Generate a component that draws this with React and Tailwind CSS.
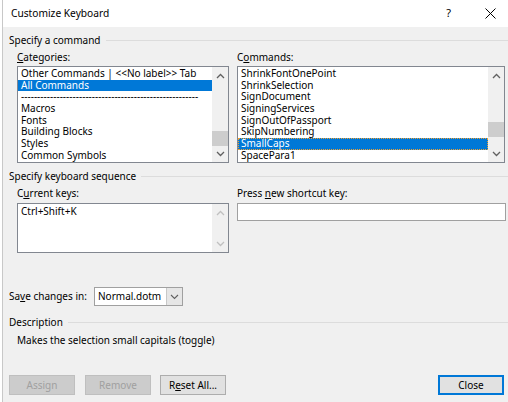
import React from "react";

const font = { fontFamily: '"Noto Sans", "Open Sans", sans-serif' };

function ScrollBar({ thumbTop, disabled, height }) {
  const color = disabled ? "#c0c0c0" : "#606060";
  return (
    <div className="flex w-[16px] flex-col bg-[#f0f0f0]" style={{ height }}>
      <div className="flex h-[17px] w-full items-center justify-center">
        <svg width="9" height="6" viewBox="0 0 9 6">
          <path d="M1 5 L4.5 1.5 L8 5" fill="none" stroke={color} strokeWidth="1.3" />
        </svg>
      </div>
      <div className="relative w-full flex-1">
        {thumbTop !== undefined && (
          <div className="absolute left-0 h-[15px] w-full bg-[#cdcdcd]" style={{ top: thumbTop }} />
        )}
      </div>
      <div className="flex h-[17px] w-full items-center justify-center">
        <svg width="9" height="6" viewBox="0 0 9 6">
          <path d="M1 1 L4.5 4.5 L8 1" fill="none" stroke={color} strokeWidth="1.3" />
        </svg>
      </div>
    </div>
  );
}

function Row({ text, selected, focus }) {
  return (
    <div
      className={
        "h-[11.7px] whitespace-nowrap pl-[3px] leading-[11.7px] " +
        (selected ? "bg-[#0078d7] text-white " : "") +
        (focus ? "outline outline-1 outline-dotted outline-[#f0a030] -outline-offset-1" : "")
      }
    >
      {text}
    </div>
  );
}

function Section({ title }) {
  return (
    <div className="flex h-[13px] items-center gap-[5px] pl-[6px] leading-[13px]">
      <span className="whitespace-nowrap">{title}</span>
      <div className="h-px flex-1 bg-[#dcdcdc]" />
    </div>
  );
}

function Button({ children, disabled, primary }) {
  return (
    <div
      className={
        "flex h-[20px] w-[66px] items-center justify-center leading-[13px] " +
        (primary
          ? "border-2 border-[#0078d7] bg-[#e1e1e1]"
          : disabled
          ? "border border-[#bfbfbf] bg-[#cccccc] text-[#a0a0a0]"
          : "border border-[#adadad] bg-[#e1e1e1]")
      }
    >
      {children}
    </div>
  );
}

export default function App() {
  const categories = [
    "Other Commands | <<No label>> Tab",
    "All Commands",
    "-------------------------------------------------------",
    "Macros",
    "Fonts",
    "Building Blocks",
    "Styles",
    "Common Symbols",
  ];
  const commands = [
    "ShrinkFontOnePoint",
    "ShrinkSelection",
    "SignDocument",
    "SigningServices",
    "SignOutOfPassport",
    "SkipNumbering",
    "SmallCaps",
    "SpacePara1",
  ];
  return (
    <div className="flex h-[402px] w-[508px] overflow-hidden bg-white text-[10px] text-black" style={font}>
      <div className="w-[3px] border-r border-[#c8c8c8] bg-white" />
      <div className="flex flex-1 flex-col">
        <div className="flex h-[27px] items-center bg-white pl-[8px]">
          <span className="text-[10.2px]">Customize Keyboard</span>
          <span className="ml-auto mr-[34px] text-[11px]">?</span>
          <svg width="11" height="11" viewBox="0 0 11 11" className="mr-[12px]">
            <path d="M0.5 0.5 L10.5 10.5 M10.5 0.5 L0.5 10.5" stroke="#000" strokeWidth="1" />
          </svg>
        </div>
        <div className="flex flex-1 flex-col bg-[#f0f0f0] pt-[7px]">
          <Section title="Specify a command" />
          <div className="mt-[4px] flex gap-[8px] pl-[14px] pr-[3px]">
            <div className="flex w-[212px] flex-col">
              <div className="h-[13px] leading-[13px]">
                <u>C</u>ategories:
              </div>
              <div className="mt-[2px] flex h-[97px] border border-[#828790] bg-white">
                <div className="flex-1 overflow-hidden pt-[1px]">
                  {categories.map((c, i) => (
                    <Row key={i} text={c} selected={i === 1} />
                  ))}
                </div>
                <ScrollBar thumbTop={47} height={95} />
              </div>
            </div>
            <div className="flex flex-1 flex-col">
              <div className="h-[13px] leading-[13px]">
                C<u>o</u>mmands:
              </div>
              <div className="mt-[2px] flex h-[97px] border border-[#828790] bg-white">
                <div className="flex-1 overflow-hidden pt-[1px]">
                  {commands.map((c, i) => (
                    <Row key={i} text={c} selected={i === 6} focus={i === 6} />
                  ))}
                </div>
                <ScrollBar thumbTop={38} height={95} />
              </div>
            </div>
          </div>
          <div className="mt-[7px]">
            <Section title="Specify keyboard sequence" />
          </div>
          <div className="mt-[4px] flex gap-[8px] pl-[14px] pr-[2px]">
            <div className="flex w-[212px] flex-col">
              <div className="h-[13px] leading-[13px]">
                C<u>u</u>rrent keys:
              </div>
              <div className="mt-[3px] flex h-[50px] border border-[#828790] bg-white">
                <div className="flex-1 pl-[3px] pt-[1px] leading-[13px]">Ctrl+Shift+K</div>
                <ScrollBar disabled height={48} />
              </div>
            </div>
            <div className="flex flex-1 flex-col">
              <div className="h-[13px] leading-[13px]">
                Press <u>n</u>ew shortcut key:
              </div>
              <div className="mt-[3px] h-[18px] border border-[#a0a0a0] bg-white" />
            </div>
          </div>
          <div className="mt-[34px] flex h-[19px] items-center pl-[6px]">
            <span className="w-[82px] leading-[13px]">
              Sa<u>v</u>e changes in:
            </span>
            <div className="ml-[3px] flex h-[19px] w-[89px] border border-[#a0a0a0] bg-white">
              <span className="flex-1 pl-[3px] leading-[17px]">Normal.dotm</span>
              <div className="flex w-[16px] items-center justify-center border-l border-[#c8c8c8] bg-[#e6e6e6]">
                <svg width="9" height="6" viewBox="0 0 9 6">
                  <path d="M1 1 L4.5 4.5 L8 1" fill="none" stroke="#606060" strokeWidth="1.1" />
                </svg>
              </div>
            </div>
          </div>
          <div className="mt-[10px]">
            <Section title="Description" />
          </div>
          <div className="mt-[5px] h-[13px] pl-[14px] leading-[13px]">
            Makes the selection small capitals (toggle)
          </div>
          <div className="mt-[28px] flex items-center gap-[10px] pl-[6px] pr-[4px]">
            <Button disabled>Assign</Button>
            <Button disabled>Remove</Button>
            <div className="-ml-[1px]">
              <Button>
                R<u>e</u>set All...
              </Button>
            </div>
            <div className="ml-auto">
              <Button primary>Close</Button>
            </div>
          </div>
        </div>
      </div>
    </div>
  );
}
